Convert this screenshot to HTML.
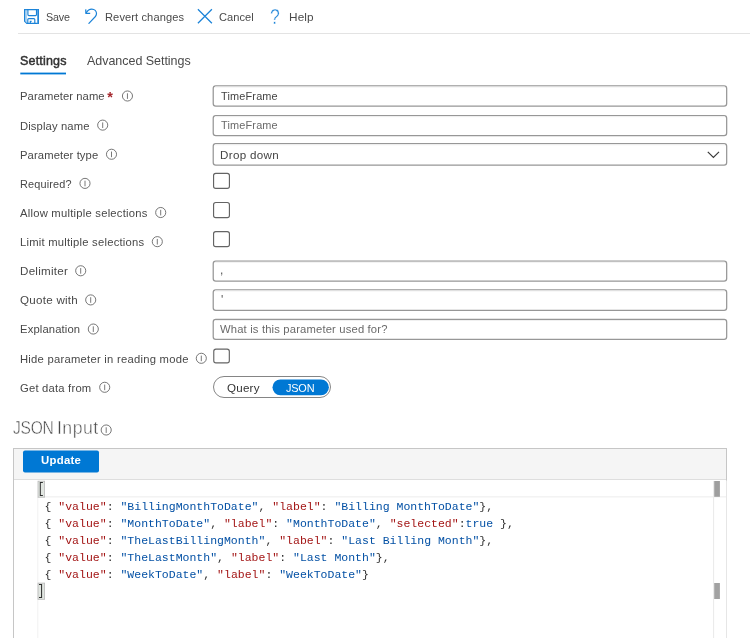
<!DOCTYPE html>
<html lang="en">
<head>
<meta charset="utf-8">
<title>Edit Parameter</title>
<style>
html,body{margin:0;padding:0;background:#fff;}
body{width:750px;height:638px;position:relative;overflow:hidden;font-family:"Liberation Sans",sans-serif;color:#333;}
.t{position:absolute;white-space:nowrap;transform-origin:0 0;}
.info{position:absolute;}
svg{display:block;overflow:visible;}
.abs{position:absolute;}
.code{position:absolute;left:37.6px;top:481px;white-space:pre;font-family:"Liberation Mono",monospace;font-size:11.5px;line-height:17px;color:#303030;}
.br{display:inline-block;transform:scaleY(1.22);transform-origin:50% 62%;}
.k{color:#a31515;}
.s{color:#0451a5;}
</style>
</head>
<body>
<div id="root" style="position:absolute;left:0;top:0;width:750px;height:638px;will-change:transform;">

<!-- toolbar icons -->
<svg class="abs" style="left:24px;top:9px" width="15" height="15" viewBox="0 0 15 15"><g fill="none" stroke="#1b83d8" stroke-width="1.15"><path d="M2.7 14.4L0.6 12.3V0.6H14.4V14.4Z"/><path d="M2 0.6V13.6M13.5 0.6V14.4" stroke-width="0.9" stroke="#4fa0e2"/><path d="M3.9 0.6V5.6a1 1 0 0 0 1 1H11.5a1 1 0 0 0 1-1V0.6"/><path d="M3.8 14.4V10.6a1 1 0 0 1 1-1H9.8a1 1 0 0 1 1 1V14.4"/><path d="M6.3 14.4V12.3H7.6"/></g></svg>
<svg class="abs" style="left:85px;top:8px" width="13" height="17" viewBox="0 0 13 17"><g transform="translate(0 0.5)" fill="none" stroke="#1b83d8" stroke-width="1.2" stroke-linecap="round"><path d="M0.7 0.9L0.95 4.8L5.2 4.8" stroke-linecap="butt"/><path d="M1.2 4.3C2.4 2.2 4.4 0.6 6.8 0.6C9.6 0.6 11.5 2.7 11.5 5.1C11.5 6.4 11.1 7.2 10.4 8L3.9 14.8"/></g></svg>
<svg class="abs" style="left:197px;top:9px" width="16" height="15" viewBox="0 0 16 15"><path d="M0.9 0.3l14 14M14.9 0.3l-14 14" fill="none" stroke="#1b83d8" stroke-width="1.25"/></svg>
<span class="t" id="t_q" style="left:270px;top:5px;font-size:22px;line-height:24px;color:#1b83d8;transform:scaleX(0.8);-webkit-text-stroke:0.4px #fff;">?</span>
<div class="abs" style="left:18px;top:33px;width:732px;height:1px;background:#e3e3e3"></div>

<!-- tab underline -->
<svg class="abs" style="left:20px;top:72px" width="47" height="3" viewBox="0 0 47 3"><rect x="0.3" y="0.6" width="45.7" height="1.8" fill="#0078d4"/></svg>

<!-- inputs -->
<svg class="abs" style="left:0;top:80px" width="750" height="300" viewBox="0 80 750 300">
<rect x="213.22" y="85.92" width="513.45" height="20.15" rx="2.6" fill="#fff" stroke="#979797" stroke-width="1.25"/>
<line x1="215.10" y1="87.05" x2="724.80" y2="87.05" stroke="#f0f0f0" stroke-width="1"/>
<rect x="213.22" y="115.53" width="513.45" height="20.05" rx="2.6" fill="#fff" stroke="#979797" stroke-width="1.25"/>
<line x1="215.10" y1="116.65" x2="724.80" y2="116.65" stroke="#f0f0f0" stroke-width="1"/>
<rect x="213.22" y="261.12" width="513.45" height="20.05" rx="2.6" fill="#fff" stroke="#979797" stroke-width="1.25"/>
<line x1="215.10" y1="262.25" x2="724.80" y2="262.25" stroke="#f0f0f0" stroke-width="1"/>
<rect x="213.22" y="289.82" width="513.45" height="20.55" rx="2.6" fill="#fff" stroke="#979797" stroke-width="1.25"/>
<line x1="215.10" y1="290.95" x2="724.80" y2="290.95" stroke="#f0f0f0" stroke-width="1"/>
<rect x="213.22" y="319.43" width="513.45" height="19.95" rx="2.6" fill="#fff" stroke="#979797" stroke-width="1.25"/>
<line x1="215.10" y1="320.55" x2="724.80" y2="320.55" stroke="#f0f0f0" stroke-width="1"/>
<rect x="213.22" y="143.62" width="513.45" height="21.45" rx="2.6" fill="#fff" stroke="#979797" stroke-width="1.25"/>
<line x1="215.10" y1="144.75" x2="724.80" y2="144.75" stroke="#f0f0f0" stroke-width="1"/>
<path d="M707.8 151.8l5.6 5.7l5.6-5.7" fill="none" stroke="#3a3a3a" stroke-width="1.2"/>
<rect x="213.57" y="173.38" width="15.85" height="15.05" rx="2.2" fill="#fff" stroke="#646464" stroke-width="1.15"/>
<rect x="213.57" y="202.47" width="15.85" height="15.15" rx="2.2" fill="#fff" stroke="#646464" stroke-width="1.15"/>
<rect x="213.57" y="231.67" width="15.85" height="14.95" rx="2.2" fill="#fff" stroke="#646464" stroke-width="1.15"/>
<rect x="213.77" y="349.07" width="15.55" height="13.85" rx="2.2" fill="#fff" stroke="#646464" stroke-width="1.15"/>
</svg>
<span class="t" id="v7" style="left:220px;top:262px;font-size:12px;line-height:16px;color:#5a5a5a">,</span>
<span class="t" id="v8" style="left:221px;top:292px;font-size:12px;line-height:16px;color:#5a5a5a">'</span>
<span class="t" id="ast" style="left:107.3px;top:88.5px;font-size:14.5px;line-height:16px;color:#a4262c;font-weight:bold">*</span>

<!-- toggle -->
<div id="tog" class="abs" style="left:213px;top:376px;width:116px;height:20px;border:1px solid #858585;border-radius:11px;background:#fff"></div>
<svg class="abs" style="left:272px;top:379px" width="58" height="17" viewBox="0 0 58 17"><rect x="0.5" y="0.4" width="56.4" height="15.8" rx="7.9" fill="#0078d4"/></svg>

<!-- JSON editor panel -->
<div id="panel" class="abs" style="left:13px;top:448px;width:712px;height:200px;border:1px solid #c6c6c6;background:#fff"></div>
<div id="phead" class="abs" style="left:14px;top:449px;width:712px;height:30px;background:#f5f5f5;border-bottom:1px solid #dedede"></div>
<div id="btn" class="abs" style="left:23px;top:450px;width:76px;height:22px;background:#0078d4;border-radius:2px;transform:translateY(0.4px)"></div>

<!-- editor decorations -->
<svg class="abs" style="left:0;top:440px" width="750" height="198" viewBox="0 440 750 198">
<rect x="726" y="480.5" width="1" height="158" fill="#e6e6e6"/>
<line x1="38" y1="496.9" x2="726" y2="496.9" stroke="#ececec" stroke-width="1"/>
<line x1="37.8" y1="497" x2="37.8" y2="638" stroke="#f1f1f1" stroke-width="1"/>
<line x1="713.6" y1="481" x2="713.6" y2="638" stroke="#e9e9e9" stroke-width="1"/>
<rect x="38" y="481.2" width="6.6" height="16" fill="#e1e6e1" stroke="#b9b9b9" stroke-width="0.8"/>
<rect x="38" y="583.1" width="6.6" height="16.2" fill="#e1e6e1" stroke="#b9b9b9" stroke-width="0.8"/>
<rect x="714.2" y="481" width="5.7" height="15.8" fill="#9e9e9e"/>
<rect x="714.2" y="583" width="5.7" height="16" fill="#a2a2a2"/>
</svg>
<div class="code" id="code"><span class="br">[</span>
 { <span class="k">"value"</span>: <span class="s">"BillingMonthToDate"</span>, <span class="k">"label"</span>: <span class="s">"Billing MonthToDate"</span>},
 { <span class="k">"value"</span>: <span class="s">"MonthToDate"</span>, <span class="k">"label"</span>: <span class="s">"MonthToDate"</span>, <span class="k">"selected"</span>:<span class="s">true</span> },
 { <span class="k">"value"</span>: <span class="s">"TheLastBillingMonth"</span>, <span class="k">"label"</span>: <span class="s">"Last Billing Month"</span>},
 { <span class="k">"value"</span>: <span class="s">"TheLastMonth"</span>, <span class="k">"label"</span>: <span class="s">"Last Month"</span>},
 { <span class="k">"value"</span>: <span class="s">"WeekToDate"</span>, <span class="k">"label"</span>: <span class="s">"WeekToDate"</span>}
<span class="br">]</span></div>

<!-- info icons -->
<svg class="info" style="left:121px;top:90px" width="13" height="13" viewBox="0 0 13 13"><g transform="translate(0.45 0.00)"><circle cx="6" cy="6" r="5.05" fill="none" stroke="#5e5e5e" stroke-width="0.85"/><path d="M6 3.3v5.6" stroke="#555" stroke-width="0.8" fill="none"/></g></svg>
<svg class="info" style="left:96px;top:119px" width="13" height="13" viewBox="0 0 13 13"><g transform="translate(0.70 0.13)"><circle cx="6" cy="6" r="5.05" fill="none" stroke="#5e5e5e" stroke-width="0.85"/><path d="M6 3.3v5.6" stroke="#555" stroke-width="0.8" fill="none"/></g></svg>
<svg class="info" style="left:105px;top:148px" width="13" height="13" viewBox="0 0 13 13"><g transform="translate(0.50 0.26)"><circle cx="6" cy="6" r="5.05" fill="none" stroke="#5e5e5e" stroke-width="0.85"/><path d="M6 3.3v5.6" stroke="#555" stroke-width="0.8" fill="none"/></g></svg>
<svg class="info" style="left:79px;top:177px" width="13" height="13" viewBox="0 0 13 13"><g transform="translate(0.00 0.39)"><circle cx="6" cy="6" r="5.05" fill="none" stroke="#5e5e5e" stroke-width="0.85"/><path d="M6 3.3v5.6" stroke="#555" stroke-width="0.8" fill="none"/></g></svg>
<svg class="info" style="left:154px;top:206px" width="13" height="13" viewBox="0 0 13 13"><g transform="translate(0.70 0.52)"><circle cx="6" cy="6" r="5.05" fill="none" stroke="#5e5e5e" stroke-width="0.85"/><path d="M6 3.3v5.6" stroke="#555" stroke-width="0.8" fill="none"/></g></svg>
<svg class="info" style="left:151px;top:235px" width="13" height="13" viewBox="0 0 13 13"><g transform="translate(0.30 0.65)"><circle cx="6" cy="6" r="5.05" fill="none" stroke="#5e5e5e" stroke-width="0.85"/><path d="M6 3.3v5.6" stroke="#555" stroke-width="0.8" fill="none"/></g></svg>
<svg class="info" style="left:74px;top:264px" width="13" height="13" viewBox="0 0 13 13"><g transform="translate(0.70 0.78)"><circle cx="6" cy="6" r="5.05" fill="none" stroke="#5e5e5e" stroke-width="0.85"/><path d="M6 3.3v5.6" stroke="#555" stroke-width="0.8" fill="none"/></g></svg>
<svg class="info" style="left:84px;top:293px" width="13" height="13" viewBox="0 0 13 13"><g transform="translate(0.70 0.91)"><circle cx="6" cy="6" r="5.05" fill="none" stroke="#5e5e5e" stroke-width="0.85"/><path d="M6 3.3v5.6" stroke="#555" stroke-width="0.8" fill="none"/></g></svg>
<svg class="info" style="left:87px;top:323px" width="13" height="13" viewBox="0 0 13 13"><g transform="translate(0.30 0.04)"><circle cx="6" cy="6" r="5.05" fill="none" stroke="#5e5e5e" stroke-width="0.85"/><path d="M6 3.3v5.6" stroke="#555" stroke-width="0.8" fill="none"/></g></svg>
<svg class="info" style="left:195px;top:352px" width="13" height="13" viewBox="0 0 13 13"><g transform="translate(0.30 0.30)"><circle cx="6" cy="6" r="5.05" fill="none" stroke="#5e5e5e" stroke-width="0.85"/><path d="M6 3.3v5.6" stroke="#555" stroke-width="0.8" fill="none"/></g></svg>
<svg class="info" style="left:98px;top:381px" width="13" height="13" viewBox="0 0 13 13"><g transform="translate(0.70 0.30)"><circle cx="6" cy="6" r="5.05" fill="none" stroke="#5e5e5e" stroke-width="0.85"/><path d="M6 3.3v5.6" stroke="#555" stroke-width="0.8" fill="none"/></g></svg>
<svg class="info" style="left:100px;top:424px" width="13" height="13" viewBox="0 0 13 13"><g transform="translate(0.20 0.00)"><circle cx="6" cy="6" r="5.05" fill="none" stroke="#5e5e5e" stroke-width="0.85"/><path d="M6 3.3v5.6" stroke="#555" stroke-width="0.8" fill="none"/></g></svg>

<!-- texts -->
<span class="t" id="t_save" style="left:46.00px;top:9px;font-size:11.8px;line-height:17px;color:#4a4a4a;letter-spacing:-0.197px;transform:scaleX(0.910);">Save</span>
<span class="t" id="t_revert" style="left:105.00px;top:9px;font-size:11.8px;line-height:17px;color:#4a4a4a;letter-spacing:0.109px;transform:scaleX(0.940);">Revert changes</span>
<span class="t" id="t_cancel" style="left:219.00px;top:9px;font-size:11.8px;line-height:17px;color:#4a4a4a;letter-spacing:0.056px;transform:scaleX(0.940);">Cancel</span>
<span class="t" id="t_help" style="left:289.00px;top:9px;font-size:11.8px;line-height:17px;color:#4a4a4a;letter-spacing:0.131px;transform:scaleX(1.000);">Help</span>
<span class="t" id="t_settings" style="left:20.00px;top:51px;font-size:13.3px;line-height:19px;color:#333;letter-spacing:0.201px;transform:scaleX(0.940);-webkit-text-stroke:0.5px #333;">Settings</span>
<span class="t" id="t_adv" style="left:87.00px;top:51px;font-size:13.3px;line-height:19px;color:#4a4a4a;letter-spacing:-0.036px;transform:scaleX(0.940);">Advanced Settings</span>
<span class="t" id="l1" style="left:20.00px;top:88px;font-size:11.6px;line-height:16px;color:#484848;letter-spacing:0.064px;transform:scaleX(0.970);">Parameter name</span>
<span class="t" id="l2" style="left:20.00px;top:118px;font-size:11.6px;line-height:16px;color:#484848;letter-spacing:0.123px;transform:scaleX(0.970);">Display name</span>
<span class="t" id="l3" style="left:20.00px;top:147px;font-size:11.6px;line-height:16px;color:#484848;letter-spacing:0.104px;transform:scaleX(0.970);">Parameter type</span>
<span class="t" id="l4" style="left:20.00px;top:176px;font-size:11.6px;line-height:16px;color:#484848;letter-spacing:0.160px;transform:scaleX(0.940);">Required?</span>
<span class="t" id="l5" style="left:20.00px;top:205px;font-size:11.6px;line-height:16px;color:#484848;letter-spacing:0.235px;transform:scaleX(0.970);">Allow multiple selections</span>
<span class="t" id="l6" style="left:20.00px;top:234px;font-size:11.6px;line-height:16px;color:#484848;letter-spacing:0.231px;transform:scaleX(0.970);">Limit multiple selections</span>
<span class="t" id="l7" style="left:20.00px;top:263px;font-size:11.6px;line-height:16px;color:#484848;letter-spacing:0.267px;transform:scaleX(1.000);">Delimiter</span>
<span class="t" id="l8" style="left:20.00px;top:292px;font-size:11.6px;line-height:16px;color:#484848;letter-spacing:0.265px;transform:scaleX(1.000);">Quote with</span>
<span class="t" id="l9" style="left:20.00px;top:321px;font-size:11.6px;line-height:16px;color:#484848;letter-spacing:0.130px;transform:scaleX(0.970);">Explanation</span>
<span class="t" id="l10" style="left:20.00px;top:351px;font-size:11.6px;line-height:16px;color:#484848;letter-spacing:0.254px;transform:scaleX(0.970);">Hide parameter in reading mode</span>
<span class="t" id="l11" style="left:20.00px;top:380px;font-size:11.6px;line-height:16px;color:#484848;letter-spacing:0.213px;transform:scaleX(0.970);">Get data from</span>
<span class="t" id="v1" style="left:221.00px;top:88px;font-size:11.6px;line-height:16px;color:#444;letter-spacing:0.184px;transform:scaleX(0.940);">TimeFrame</span>
<span class="t" id="v2" style="left:221.00px;top:117px;font-size:11.6px;line-height:16px;color:#6a6a6a;letter-spacing:0.184px;transform:scaleX(0.940);">TimeFrame</span>
<span class="t" id="v3" style="left:220.00px;top:147px;font-size:11.6px;line-height:16px;color:#444;letter-spacing:0.327px;transform:scaleX(1.000);">Drop down</span>
<span class="t" id="v9" style="left:220.00px;top:321px;font-size:11.6px;line-height:16px;color:#6a6a6a;letter-spacing:0.164px;transform:scaleX(0.970);">What is this parameter used for?</span>
<span class="t" id="t_query" style="left:227.00px;top:380px;font-size:11.6px;line-height:16px;color:#333;letter-spacing:0.234px;transform:scaleX(1.000);">Query</span>
<span class="t" id="t_json" style="left:286.00px;top:380px;font-size:11.6px;line-height:16px;color:#fff;letter-spacing:-0.188px;transform:scaleX(0.940);">JSON</span>
<span class="t" id="t_ji" style="left:13.00px;top:416px;font-size:17.7px;line-height:25px;color:#4a4a4a;letter-spacing:-0.300px;transform:scaleX(0.880);-webkit-text-stroke:0.45px #fff;">JSON</span>
<span class="t" id="t_ji2" style="left:57.00px;top:416px;font-size:17.7px;line-height:25px;color:#4a4a4a;letter-spacing:0.450px;transform:scaleX(1.000);-webkit-text-stroke:0.45px #fff;">Input</span>
<span class="t" id="t_upd" style="left:41.00px;top:452px;font-size:11.4px;line-height:16px;color:#fff;letter-spacing:0.255px;transform:scaleX(1.000);font-weight:bold;">Update</span>

</div>
</body>
</html>
